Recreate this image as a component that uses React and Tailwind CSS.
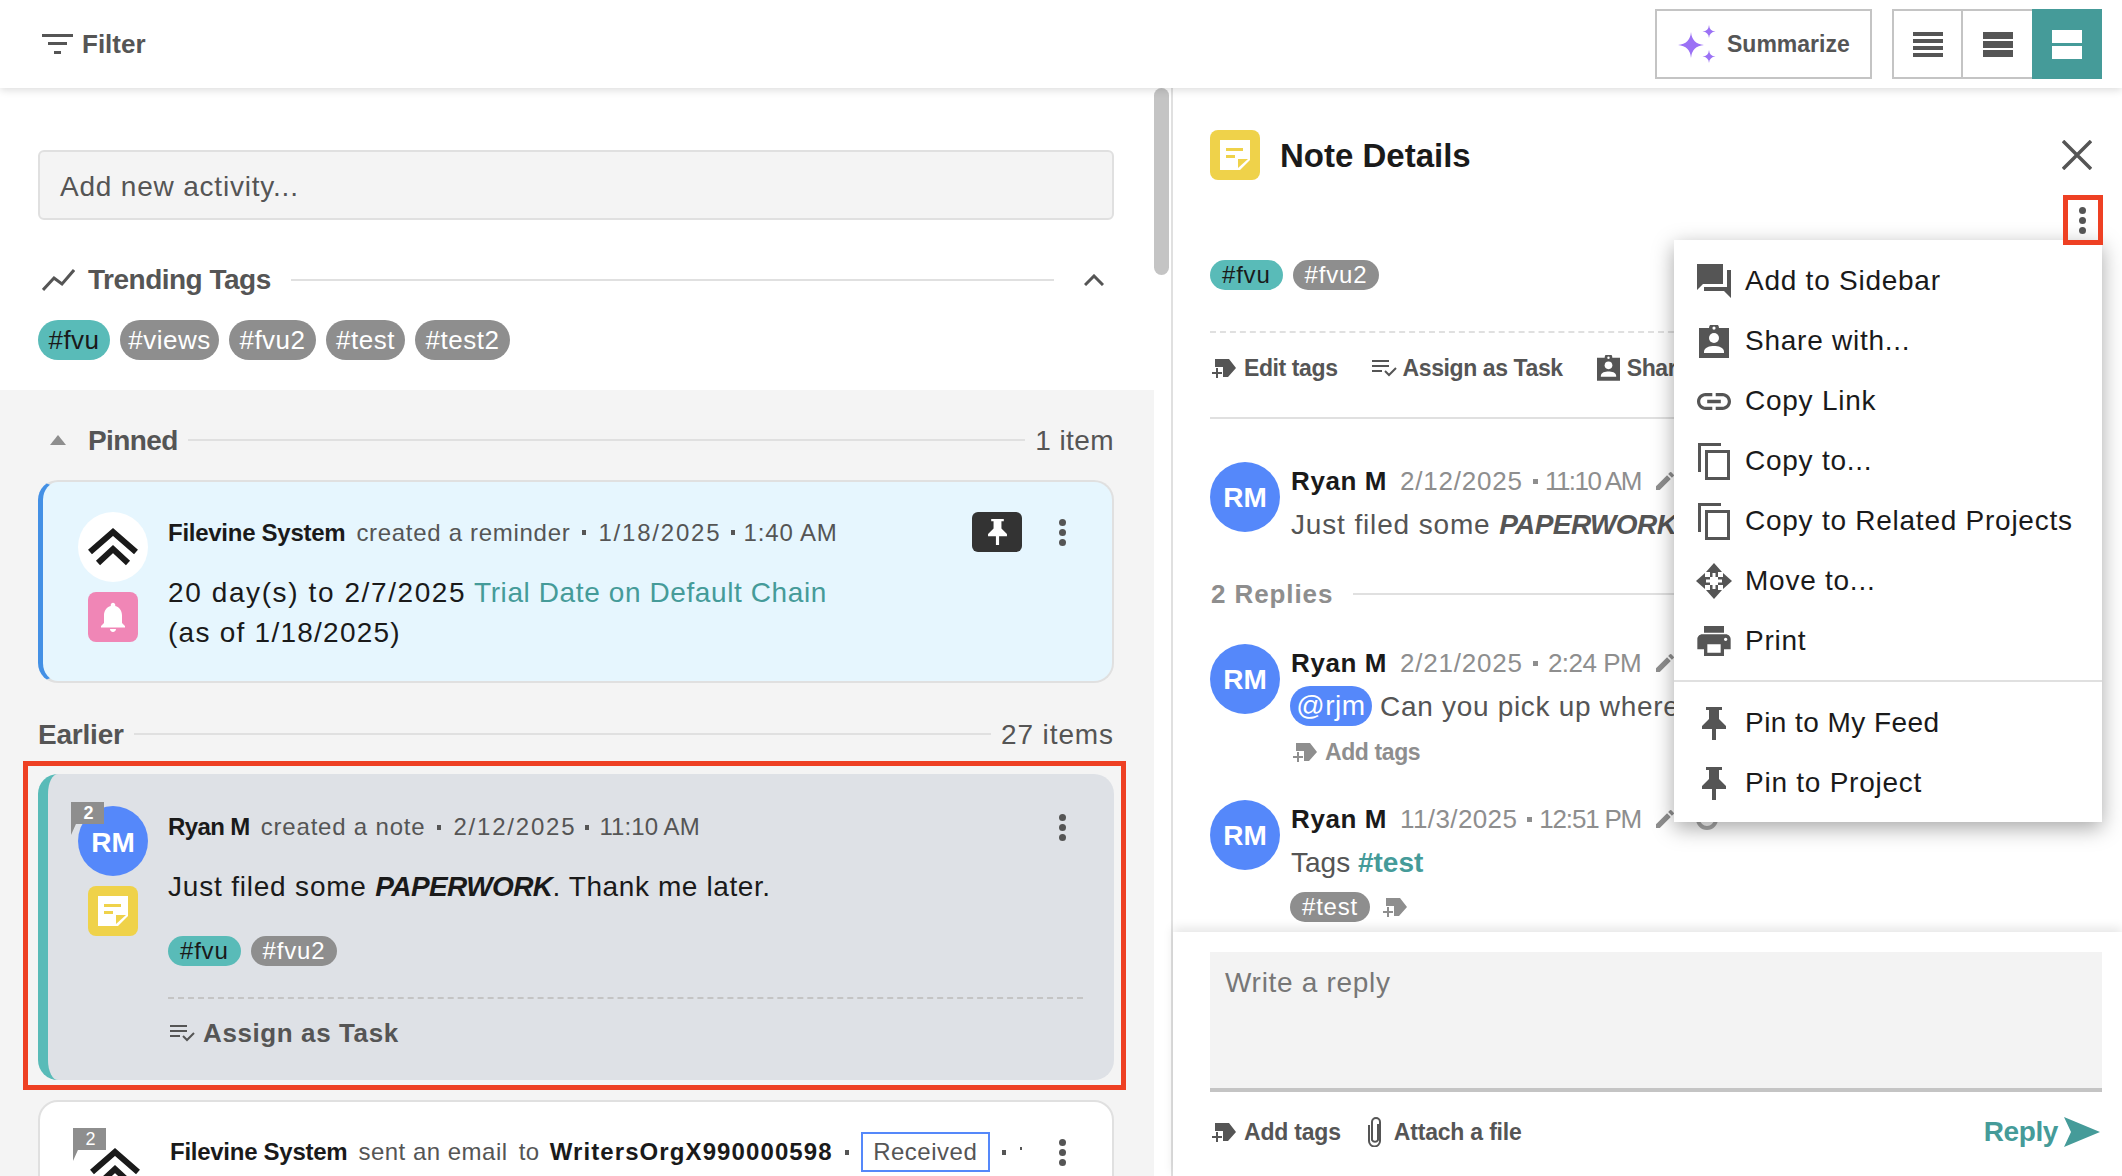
import { MdEdit } from "react-icons/md";

const Kebab = () => (
  <div className="flex flex-col gap-[3px] w-[7px] shrink-0">
    <span className="w-[7px] h-[7px] rounded-full bg-[#555]" />
    <span className="w-[7px] h-[7px] rounded-full bg-[#555]" />
    <span className="w-[7px] h-[7px] rounded-full bg-[#555]" />
  </div>
);

const Dot = ({ className = "" }) => <span className={`w-[4px] h-[5px] bg-[#555] shrink-0 ${className}`} />;

const Tag = ({ children, teal, big, className = "" }) => (
  <span
    className={`inline-flex items-center justify-center rounded-[20px] ${
      big ? "h-[40px] text-[26px] tracking-[0.5px]" : "h-[30px] text-[24px] px-[12px] tracking-[0.8px]"
    } ${teal ? "bg-[#59bbb8] text-[#1a1a1a]" : "bg-[#8e8e8e] text-white"} ${className}`}
  >
    {children}
  </span>
);

const TagPlus = ({ color = "#555" }) => (
  <svg width="24" height="19" viewBox="0 0 24 19" fill={color} className="shrink-0">
    <path d="M3 0H17L24 9 16 18H11V8H3Z" />
    <path d="M4 9H6V13H10V15H6V19H4V15H0V13H4Z" />
  </svg>
);

const AssignIcon = () => (
  <svg width="25" height="18" viewBox="0 0 25 18" fill="#555" className="shrink-0">
    <rect x="0" y="1" width="17" height="2" />
    <rect x="0" y="6" width="17" height="2" />
    <rect x="0" y="11" width="10" height="2" />
    <path d="M13 12l4 4 7-7" fill="none" stroke="#555" strokeWidth="2" />
  </svg>
);

const ShareIcon = ({ w = 30, h = 33 }) => (
  <svg width={w} height={h} viewBox="0 0 30 33" className="shrink-0">
    <path
      fillRule="evenodd"
      fill="#555"
      d="M0 3H10A5 5 0 0 1 20 3H30V33H0ZM15 1.5A1.6 1.6 0 1 0 15 4.7 1.6 1.6 0 1 0 15 1.5Z"
    />
    <circle cx="15" cy="13" r="5" fill="#fff" />
    <path d="M5 27C5 22 11 21 15 21S25 22 25 27V28H5Z" fill="#fff" />
  </svg>
);

const CopyIcon = () => (
  <svg width="32" height="37" viewBox="0 0 32 37" fill="#555" className="shrink-0">
    <path d="M0 0H23V3H3V29H0Z" />
    <path fillRule="evenodd" d="M7 7H32V37H7ZM10 10V34H29V10Z" />
  </svg>
);

const PinIcon = ({ fill = "#555", w = 24, h = 33 }) => (
  <svg width={w} height={h} viewBox="0 0 24 33" fill={fill} className="shrink-0">
    <path d="M4 0H20V3H17V12L24 19V22H14V33H10V22H0V19L7 12V3H4Z" />
  </svg>
);

const NoteTile = () => (
  <div className="w-[50px] h-[50px] rounded-[8px] bg-[#efd24a] flex items-center justify-center shrink-0">
    <svg width="30" height="30" viewBox="0 0 30 30">
      <path d="M0 0H30V20L20 30H0Z" fill="#fff" />
      <rect x="6" y="8" width="17" height="3" fill="#efd24a" />
      <rect x="6" y="15" width="9" height="3" fill="#efd24a" />
      <path d="M18 19H28L18 28Z" fill="#efd24a" />
    </svg>
  </div>
);

const FvLogo = () => (
  <div className="w-[70px] h-[70px] rounded-full bg-white flex items-center justify-center">
    <svg width="50" height="40" viewBox="0 0 50 40" fill="none" stroke="#1a1a1a" strokeWidth="6">
      <path d="M2 25L25 5 48 25" />
      <path d="M10 36L25 22 40 36" />
    </svg>
  </div>
);

const Flag = ({ n }) => (
  <div className="absolute -left-[7px] -top-[4px] w-[33px] h-[33px] bg-[#8e8e8e] text-white text-[18px] leading-[22px] text-center pl-[2px] [clip-path:polygon(0_0,100%_0,100%_67%,15%_67%,0_100%)]">
    {n}
  </div>
);

const Avatar = ({ flag }) => (
  <div className="relative w-[70px] h-[70px] rounded-full bg-[#5588fa] text-white font-bold text-[28px] flex items-center justify-center shrink-0">
    <span className={flag ? "pt-[3px]" : "pt-[1px]"}>RM</span>
    {flag && <Flag n={flag} />}
  </div>
);

const SectionHead = ({ left, right, rightTrack = "tracking-[0.4px]", className = "" }) => (
  <div className={`flex items-center h-[36px] ${className}`}>
    {left}
    <div className="flex-1 h-[2px] bg-[#e0e0e0] mx-[10px]" />
    <span className={`text-[28px] text-[#555] pt-[2px] ${rightTrack}`}>{right}</span>
  </div>
);

const CommentHead = ({ date, dateTrack, time, timeTrack, ring }) => (
  <div className="flex items-center h-[36px] mt-[1px] whitespace-nowrap text-[26px] text-[#8e8e8e]">
    <span className="font-bold text-[#1a1a1a] tracking-[0.6px] w-[109px]">Ryan M</span>
    <span className={dateTrack}>{date}</span>
    <span className="ml-[10px] w-[5px] h-[5px] bg-[#8e8e8e] shrink-0" />
    <span className={timeTrack}>{time}</span>
    <MdEdit size={24} color="#8e8e8e" className="ml-[12px] shrink-0" />
    {ring && <span className="ml-[19px] w-[22px] h-[22px] rounded-full border-[4px] border-[#aaa]" />}
  </div>
);

const menuItems = [
  {
    label: "Add to Sidebar",
    icon: (
      <svg width="34" height="34" viewBox="0 0 34 34" fill="#555">
        <path d="M0 0H26V20H6L0 26Z" />
        <path d="M30 6H34V34L27 27H7V23H30Z" />
      </svg>
    ),
  },
  { label: "Share with...", icon: <ShareIcon /> },
  {
    label: "Copy Link",
    icon: (
      <svg width="34" height="17" viewBox="2 7 20 10" fill="#555">
        <path d="M3.9 12c0-1.71 1.39-3.1 3.1-3.1h4V7H7c-2.76 0-5 2.24-5 5s2.24 5 5 5h4v-1.9H7c-1.71 0-3.1-1.39-3.1-3.1zM8 13h8v-2H8v2zm9-6h-4v1.9h4c1.71 0 3.1 1.39 3.1 3.1s-1.39 3.1-3.1 3.1h-4V17h4c2.76 0 5-2.24 5-5s-2.24-5-5-5z" />
      </svg>
    ),
  },
  { label: "Copy to...", icon: <CopyIcon /> },
  { label: "Copy to Related Projects", icon: <CopyIcon /> },
  {
    label: "Move to...",
    icon: (
      <svg width="36" height="36" viewBox="0 0 36 36" fill="#555">
        <path d="M18 0L26 9H22V14H14V9H10Z" />
        <path d="M18 36L26 27H22V22H14V27H10Z" />
        <path d="M0 18L9 10V14H14V22H9V26Z" />
        <path d="M36 18L27 10V14H22V22H27V26Z" />
        <rect x="16.500" y="10" width="3" height="16" fill="#fff" />
        <rect x="10" y="16.500" width="16" height="3" fill="#fff" />
      </svg>
    ),
  },
  {
    label: "Print",
    icon: (
      <svg width="34" height="30" viewBox="2 3 20 18" fill="#555">
        <path d="M19 8H5c-1.66 0-3 1.34-3 3v6h4v4h12v-4h4v-6c0-1.66-1.34-3-3-3zm-3 11H8v-5h8v5zm3-7c-.55 0-1-.45-1-1s.45-1 1-1 1 .45 1 1-.45 1-1 1zm-1-9H6v4h12V3z" />
      </svg>
    ),
  },
];

const MenuRow = ({ item, track = "tracking-[0.75px]" }) => (
  <div className="flex items-center h-[60px] pl-[22px]">
    <div className="w-[36px] flex justify-center shrink-0">{item.icon}</div>
    <span className={`ml-[13px] text-[28px] text-[#1a1a1a] whitespace-nowrap ${track}`}>{item.label}</span>
  </div>
);

export default function App() {
  return (
    <div className="w-[2122px] h-[1176px] flex flex-col overflow-hidden bg-white [font-family:'Liberation_Sans',Arial,sans-serif]">
      {/* top bar */}
      <header className="relative z-10 h-[88px] shrink-0 bg-white flex items-center justify-between pl-[42px] pr-[20px] shadow-[0_2px_8px_rgba(0,0,0,0.14)]">
        <div className="flex items-center gap-[9px]">
          <svg width="31" height="20" viewBox="0 0 31 20" fill="#555">
            <rect x="0" y="0" width="31" height="3" />
            <rect x="6" y="8" width="19" height="3" />
            <rect x="12" y="17" width="7" height="3" />
          </svg>
          <span className="text-[26px] font-bold text-[#555]">Filter</span>
        </div>
        <div className="flex items-center gap-[20px]">
          <div className="w-[217px] h-[70px] border-2 border-[#c4c4c4] flex items-center pl-[21px] gap-[11px]">
            <svg width="38" height="38" viewBox="0 0 38 38" fill="#9b71f5">
              <path d="M13 7Q14 19 26 20 14 21 13 33 12 21 0 20 12 19 13 7Z" />
              <path d="M31 0Q31.5 6 37.500 6.500 31.5 7 31 13 30.500 7 24.500 6.500 30.500 6 31 0Z" />
              <path d="M31 25Q31.5 31 37.500 31.500 31.5 32 31 38 30.500 32 24.500 31.500 30.500 31 31 25Z" />
            </svg>
            <span className="text-[23px] font-bold text-[#555]">Summarize</span>
          </div>
          <div className="flex h-[70px]">
            <div className="w-[71px] border-2 border-[#c4c4c4] flex flex-col items-center justify-center gap-[3px]">
              <span className="w-[30px] h-[4px] bg-[#555]" />
              <span className="w-[30px] h-[4px] bg-[#555]" />
              <span className="w-[30px] h-[4px] bg-[#555]" />
              <span className="w-[30px] h-[4px] bg-[#555]" />
            </div>
            <div className="w-[69px] border-y-2 border-[#c4c4c4] flex flex-col items-center justify-center gap-[2px]">
              <span className="w-[30px] h-[7px] bg-[#555]" />
              <span className="w-[30px] h-[7px] bg-[#555]" />
              <span className="w-[30px] h-[7px] bg-[#555]" />
            </div>
            <div className="w-[70px] bg-[#459b99] flex flex-col items-center justify-center gap-[3px]">
              <span className="w-[30px] h-[13px] bg-white" />
              <span className="w-[30px] h-[13px] bg-white" />
            </div>
          </div>
        </div>
      </header>

      <main className="flex-1 min-h-0 flex">
        {/* activity feed */}
        <section className="w-[1154px] shrink-0 overflow-hidden bg-[#f4f4f4]">
          <div className="h-[302px] bg-white pl-[38px] pr-[40px] pt-[62px]">
            <div className="h-[70px] rounded-[6px] border-2 border-[#e0e0e0] bg-[#f4f4f4] flex items-center pl-[20px] pt-[3px] text-[28px] text-[#555] tracking-[0.8px]">
              Add new activity...
            </div>
            <div className="flex items-center h-[36px] mt-[42px]">
              <svg width="33" height="22" viewBox="0 0 33 22" fill="none" stroke="#555" strokeWidth="3" className="ml-[4px] shrink-0">
                <path d="M1 21L12 9 20 15 32 1" />
              </svg>
              <span className="ml-[13px] text-[28px] font-bold text-[#555] tracking-[-0.5px] whitespace-nowrap">Trending Tags</span>
              <div className="flex-1 h-[2px] bg-[#e0e0e0] ml-[20px] mr-[30px]" />
              <svg width="20" height="12" viewBox="0 0 20 12" fill="none" stroke="#555" strokeWidth="3" className="mr-[10px] shrink-0">
                <path d="M1 11L10 2 19 11" />
              </svg>
            </div>
            <div className="flex gap-[10px] mt-[22px]">
              <Tag teal big className="w-[72px]">#fvu</Tag>
              <Tag big className="w-[99px]">#views</Tag>
              <Tag big className="w-[87px]">#fvu2</Tag>
              <Tag big className="w-[79px]">#test</Tag>
              <Tag big className="w-[95px]">#test2</Tag>
            </div>
          </div>

          <div className="pl-[38px] pr-[40px] pt-[32px]">
            <SectionHead
              left={
                <>
                  <svg width="16" height="10" viewBox="0 0 16 10" fill="#8e8e8e" className="ml-[12px] shrink-0"><path d="M8 0L16 10H0Z" /></svg>
                  <span className="ml-[22px] pt-[1px] text-[28px] font-bold text-[#555] tracking-[-0.6px]">Pinned</span>
                </>
              }
              right="1 item"
            />

            {/* pinned reminder */}
            <div className="mt-[22px] h-[203px] rounded-[20px] border-2 border-l-[5px] border-[#e0e0e0] border-l-[#4390e5] bg-[#e6f6fe] flex pl-[35px] pt-[30px]">
              <div className="w-[70px] shrink-0 flex flex-col items-center gap-[10px]">
                <FvLogo />
                <div className="w-[50px] h-[50px] rounded-[8px] bg-[#f086b6] flex items-center justify-center">
                  <svg width="36" height="36" viewBox="0 0 24 24" fill="#fff">
                    <path d="M12 22c1.1 0 2-.9 2-2h-4c0 1.1.89 2 2 2zm6-6v-5c0-3.07-1.64-5.64-4.5-6.32V4c0-.83-.67-1.5-1.5-1.5s-1.5.67-1.5 1.5v.68C7.63 5.36 6 7.92 6 11v5l-2 2v1h16v-1l-2-2z" />
                  </svg>
                </div>
              </div>
              <div className="ml-[20px] flex-1 pr-[46px]">
                <div className="flex items-center h-[40px] whitespace-nowrap text-[24px] text-[#555]">
                  <span className="pt-[2px] font-bold text-[#1a1a1a] tracking-[-0.27px]">Filevine System</span>
                  <span className="pt-[2px] ml-[11px] tracking-[0.7px]">created a reminder</span>
                  <Dot className="ml-[12px]" />
                  <span className="pt-[2px] ml-[12px] tracking-[1.8px]">1/18/2025</span>
                  <Dot className="ml-[10px]" />
                  <span className="pt-[2px] ml-[8px] tracking-[0.9px]">1:40 AM</span>
                  <div className="ml-auto w-[50px] h-[40px] rounded-[6px] bg-[#333] flex items-center justify-center">
                    <PinIcon fill="#fff" w={19} h={26} />
                  </div>
                  <div className="ml-[37px]"><Kebab /></div>
                </div>
                <p className="mt-[21px] text-[28px] leading-[40px] text-[#1a1a1a]">
                  <span className="tracking-[1.6px]">20 day(s) to 2/7/2025</span>{" "}
                  <span className="text-[#459b99] tracking-[0.6px]">Trial Date on Default Chain</span>
                  <br />
                  <span className="tracking-[1.25px]">(as of 1/18/2025)</span>
                </p>
              </div>
            </div>

            <SectionHead
              className="mt-[33px]"
              left={<span className="pt-[1px] text-[28px] font-bold text-[#555] tracking-[-0.2px]">Earlier</span>}
              right="27 items"
              rightTrack="tracking-[0.9px]"
            />

            {/* selected note, red outline */}
            <div className="mt-[9px] -ml-[15px] -mr-[12px] border-[5px] border-[#ee4023] pl-[10px] pr-[7px] pt-[8px] pb-[5px]">
              <div className="h-[306px] rounded-[20px] border-l-[10px] border-[#59bbb8] bg-[#dee1e6] flex pl-[30px] pt-[32px]">
                <div className="w-[70px] shrink-0 flex flex-col items-center gap-[10px]">
                  <Avatar flag="2" />
                  <NoteTile />
                </div>
                <div className="ml-[20px] flex-1 pr-[31px]">
                  <div className="flex items-center h-[36px] mt-[3px] whitespace-nowrap text-[24px] text-[#555]">
                    <span className="font-bold text-[#1a1a1a] tracking-[-0.6px]">Ryan M</span>
                    <span className="ml-[11px] tracking-[0.8px]">created a note</span>
                    <Dot className="ml-[12px]" />
                    <span className="ml-[12px] tracking-[1.8px]">2/12/2025</span>
                    <Dot className="ml-[9px]" />
                    <span className="ml-[10px] tracking-[0.1px]">11:10 AM</span>
                    <div className="ml-auto mr-[17px]"><Kebab /></div>
                  </div>
                  <p className="mt-[22px] h-[40px] text-[28px] leading-[40px] text-[#1a1a1a] tracking-[0.8px]">
                    Just filed some <b className="italic tracking-[-0.6px]">PAPERWORK</b>
                    <span className="tracking-[0.6px]">. Thank me later.</span>
                  </p>
                  <div className="flex gap-[10px] mt-[29px]">
                    <Tag teal>#fvu</Tag>
                    <Tag>#fvu2</Tag>
                  </div>
                  <div className="mt-[31px] border-t-2 border-dashed border-[#c4c4c4]" />
                  <div className="flex items-center h-[36px] mt-[16px] gap-[8px] ml-[2px]">
                    <AssignIcon />
                    <span className="text-[26px] font-bold text-[#555] tracking-[0.6px]">Assign as Task</span>
                  </div>
                </div>
              </div>
            </div>

            {/* next card, runs off the page */}
            <div className="mt-[10px] h-[200px] rounded-[20px] border-2 border-[#e0e0e0] bg-white flex pl-[40px] pt-[30px]">
              <div className="w-[70px] shrink-0 relative">
                <FvLogo />
                <Flag n="2" />
              </div>
              <div className="ml-[20px] flex-1">
                <div className="flex items-center h-[40px] whitespace-nowrap text-[24px] text-[#555]">
                  <span className="font-bold text-[#1a1a1a] tracking-[-0.27px]">Filevine System</span>
                  <span className="ml-[11px] tracking-[0.5px]">sent an email</span>
                  <span className="ml-[11px] tracking-[0.5px]">to</span>
                  <span className="ml-[10px] font-bold text-[#1a1a1a] tracking-[1.1px]">WritersOrgX990000598</span>
                  <Dot className="ml-[12px]" />
                  <span className="ml-[12px] h-[40px] w-[129px] border-2 border-[#5588fa] flex items-center justify-center tracking-[0.5px]">Received</span>
                  <Dot className="ml-[12px]" />
                  <span className="ml-[14px] w-[2px] h-[3px] -mt-[8px] bg-[#555]" />
                  <div className="ml-[37px]"><Kebab /></div>
                </div>
              </div>
            </div>
          </div>
        </section>

        {/* scrollbar gutter */}
        <div className="w-[17px] shrink-0 bg-white">
          <div className="w-[15px] h-[187px] rounded-b-full rounded-t-full bg-[#c4c4c4]" />
        </div>

        {/* note details */}
        <aside className="relative flex-1 min-w-0 flex flex-col border-l-2 border-[#e0e0e0]">
          <div className="h-[844px] shrink-0 overflow-hidden pl-[37px] pr-[20px] pt-[42px]">
            <div className="flex items-center justify-between h-[50px]">
              <div className="flex items-center gap-[20px]">
                <NoteTile />
                <h1 className="pt-[2px] text-[33px] font-bold text-[#1a1a1a]">Note Details</h1>
              </div>
              <svg width="30" height="30" viewBox="0 0 30 30" stroke="#555" strokeWidth="3.500" className="mr-[10px]">
                <path d="M1 1L29 29M29 1L1 29" />
              </svg>
            </div>
            <div className="flex gap-[10px] mt-[80px]">
              <Tag teal>#fvu</Tag>
              <Tag>#fvu2</Tag>
            </div>
            <div className="mt-[41px] border-t-2 border-dashed border-[#e0e0e0]" />
            <div className="flex items-center h-[36px] mt-[17px] pl-[2px] whitespace-nowrap text-[23px] font-bold text-[#555] tracking-[-0.4px]">
              <TagPlus />
              <span className="ml-[8px]">Edit tags</span>
              <span className="ml-[34px]"><AssignIcon /></span>
              <span className="ml-[6px]">Assign as Task</span>
              <span className="ml-[34px]"><ShareIcon w={23} h={26} /></span>
              <span className="ml-[7px]">Share</span>
            </div>
            <div className="mt-[31px] h-[2px] bg-[#e0e0e0]" />

            <div className="flex gap-[11px] mt-[43px]">
              <Avatar />
              <div className="flex-1 min-w-0">
                <CommentHead date="2/12/2025" dateTrack="tracking-[0.8px]" time="11:10 AM" timeTrack="ml-[7px] tracking-[-1.5px]" />
                <p className="mt-[6px] h-[40px] text-[28px] leading-[40px] text-[#555] tracking-[0.85px] whitespace-nowrap">
                  Just filed some <b className="italic tracking-[-0.6px]">PAPERWORK</b>
                </p>
              </div>
            </div>

            <div className="flex items-center h-[36px] mt-[31px] pl-[1px]">
              <span className="text-[26px] font-bold text-[#8e8e8e] tracking-[0.9px]">2 Replies</span>
              <div className="flex-1 h-[2px] bg-[#e0e0e0] ml-[20px]" />
            </div>

            <div className="flex gap-[11px] mt-[32px]">
              <Avatar />
              <div className="flex-1 min-w-0">
                <CommentHead date="2/21/2025" dateTrack="tracking-[0.8px]" time="2:24 PM" timeTrack="ml-[10px] tracking-[-0.5px]" />
                <div className="flex items-center h-[40px] mt-[5px] text-[28px] text-[#555] tracking-[0.7px] whitespace-nowrap">
                  <span className="-ml-[1px] h-[40px] w-[82px] rounded-[20px] bg-[#5588fa] text-white flex items-center justify-center tracking-[0.5px]">@rjm</span>
                  <span className="ml-[8px] pt-[2px]">Can you pick up where</span>
                </div>
                <div className="flex items-center h-[36px] mt-[8px] pl-[2px] gap-[8px]">
                  <TagPlus color="#8e8e8e" />
                  <span className="text-[23px] font-bold text-[#8e8e8e] tracking-[-0.4px]">Add tags</span>
                </div>
              </div>
            </div>

            <div className="flex gap-[11px] mt-[30px]">
              <Avatar />
              <div className="flex-1 min-w-0">
                <CommentHead date="11/3/2025" dateTrack="tracking-[0.4px]" time="12:51 PM" timeTrack="ml-[7px] tracking-[-1.2px]" ring />
                <p className="mt-[6px] h-[40px] text-[28px] leading-[40px] text-[#555] whitespace-nowrap">
                  Tags <b className="text-[#459b99]">#test</b>
                </p>
                <div className="flex items-center gap-[13px] mt-[9px] -ml-[1px]">
                  <Tag>#test</Tag>
                  <TagPlus color="#8e8e8e" />
                </div>
              </div>
            </div>
          </div>

          {/* reply box */}
          <div className="flex-1 bg-white pl-[37px] pr-[20px] pt-[20px] shadow-[0_-4px_10px_rgba(0,0,0,0.1)] z-[1]">
            <div className="h-[140px] bg-[#f3f3f3] border-b-4 border-[#c4c4c4] pl-[15px] pt-[10px] text-[28px] text-[#777] tracking-[0.7px]">
              Write a reply
            </div>
            <div className="flex items-center h-[36px] mt-[22px] pl-[2px] text-[23px] font-bold text-[#555] tracking-[-0.2px]">
              <TagPlus />
              <span className="ml-[8px]">Add tags</span>
              <svg width="16" height="30" viewBox="0 0 16 30" fill="none" stroke="#555" strokeWidth="2" className="ml-[26px] shrink-0">
                <path d="M11 7V23A3.500 3.500 0 0 1 5 23V5A4 4 0 0 1 13 5V24A5.500 5.500 0 0 1 2 24V8" />
              </svg>
              <span className="ml-[11px]">Attach a file</span>
              <span className="ml-auto text-[28px] text-[#459b99] tracking-[-0.4px]">Reply</span>
              <svg width="36" height="30" viewBox="0 0 36 30" fill="#459b99" className="ml-[6px] mr-[2px] shrink-0">
                <path d="M0 0L36 15 0 30 7 15Z" />
              </svg>
            </div>
          </div>

          {/* open menu + kebab with red outline on top */}
          <div className="absolute z-20 top-[152px] left-[501px] w-[428px] h-[582px] bg-white shadow-[0_6px_20px_rgba(0,0,0,0.35)] pt-[11px]">
            {menuItems.map((item) => (
              <MenuRow key={item.label} item={item} />
            ))}
            <div className="h-[2px] bg-[#e0e0e0] mt-[9px] mb-[11px]" />
            <MenuRow item={{ label: "Pin to My Feed", icon: <PinIcon /> }} track="tracking-[0.45px]" />
            <MenuRow item={{ label: "Pin to Project", icon: <PinIcon /> }} />
          </div>
          <div className="absolute z-20 top-[107px] right-[19px] w-[40px] h-[50px] border-[5px] border-[#ee4023] flex items-center justify-center pr-[2px]">
            <Kebab />
          </div>
        </aside>
      </main>
    </div>
  );
}
